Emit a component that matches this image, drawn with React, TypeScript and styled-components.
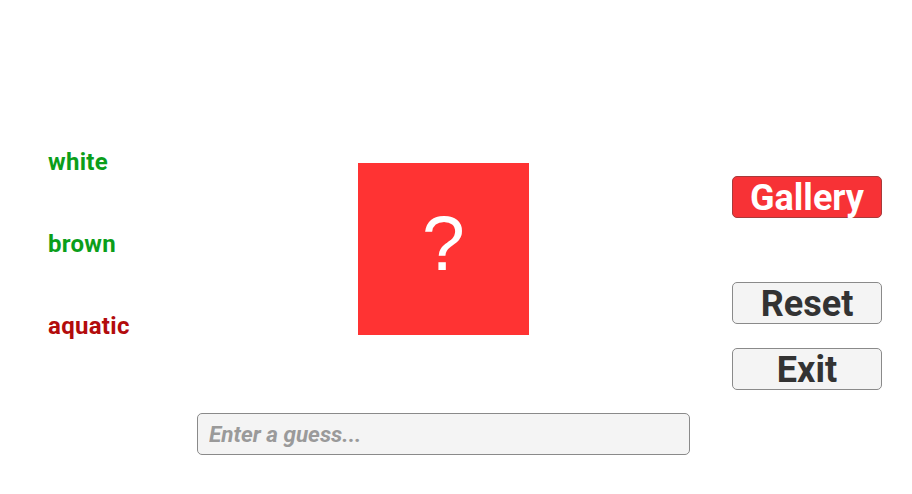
import React, { useState } from 'react';
import styled, { createGlobalStyle } from 'styled-components';

const GlobalStyle = createGlobalStyle`
  html, body {
    margin: 0;
    padding: 0;
    background: #ffffff;
    font-family: Roboto, "Liberation Sans", Arial, sans-serif;
  }
`;

const Board = styled.div`
  display: grid;
  grid-template-columns: 197px 161px 171px 161px 1fr;
  grid-template-rows: auto auto;
  align-content: start;
  row-gap: 23px;
  padding-top: 150px;
  width: 912px;
  height: 494px;
  box-sizing: border-box;
`;

const Clues = styled.ul`
  grid-column: 1;
  grid-row: 1;
  list-style: none;
  margin: 0;
  padding: 0 0 0 48px;
  display: flex;
  flex-direction: column;
  gap: 58px;
`;

const Clue = styled.li<{ $correct: boolean }>`
  font-size: 24px;
  line-height: 24px;
  font-weight: 700;
  letter-spacing: 0.3px;
  white-space: nowrap;
  color: ${({ $correct }) => ($correct ? '#0b9e1a' : '#b30c0c')};
`;

const Mystery = styled.div`
  grid-column: 3;
  grid-row: 1;
  align-self: start;
  margin-top: 13px;
  width: 171px;
  height: 172px;
  box-sizing: border-box;
  padding-bottom: 12px;
  background: #ff3333;
  color: #ffffff;
  display: flex;
  align-items: center;
  justify-content: center;
  font-family: "Liberation Sans", Arial, sans-serif;
  font-size: 77px;
  font-weight: 400;
`;

const Controls = styled.div`
  grid-column: 5;
  grid-row: 1;
  justify-self: end;
  margin-top: 26px;
  padding-right: 30px;
  display: flex;
  flex-direction: column;
`;

const ActionButton = styled.button<{ $primary?: boolean; $gapAfter?: number }>`
  width: 150px;
  height: 42px;
  box-sizing: border-box;
  padding: 0;
  border-radius: 5px;
  border: 1px solid ${({ $primary }) => ($primary ? '#a83a3a' : '#8a8a8a')};
  background: ${({ $primary }) => ($primary ? '#f73236' : '#f4f4f4')};
  color: ${({ $primary }) => ($primary ? '#ffffff' : '#333333')};
  font-family: Roboto, "Liberation Sans", Arial, sans-serif;
  font-size: 36px;
  font-weight: 700;
  line-height: 42px;
  margin-bottom: ${({ $gapAfter }) => $gapAfter ?? 0}px;
  cursor: pointer;
`;

const GuessInput = styled.input`
  grid-column: 2 / 5;
  grid-row: 2;
  align-self: start;
  width: 493px;
  height: 42px;
  box-sizing: border-box;
  padding: 0 11px;
  border: 1px solid #8a8a8a;
  border-radius: 5px;
  background: #f4f4f4;
  font-family: Roboto, "Liberation Sans", Arial, sans-serif;
  font-size: 22.5px;
  font-weight: 700;
  font-style: italic;
  color: #333333;
  outline: none;

  &::placeholder {
    color: #9a9a9a;
  }
`;

const clues = [
  { word: 'white', correct: true },
  { word: 'brown', correct: true },
  { word: 'aquatic', correct: false },
];

export default function App() {
  const [guess, setGuess] = useState('');

  return (
    <>
      <GlobalStyle />
      <Board>
        <Clues>
          {clues.map((c) => (
            <Clue key={c.word} $correct={c.correct}>
              {c.word}
            </Clue>
          ))}
        </Clues>

        <Mystery>?</Mystery>

        <Controls>
          <ActionButton $primary $gapAfter={64}>
            Gallery
          </ActionButton>
          <ActionButton $gapAfter={24}>Reset</ActionButton>
          <ActionButton>Exit</ActionButton>
        </Controls>

        <GuessInput
          placeholder="Enter a guess..."
          value={guess}
          onChange={(e) => setGuess(e.target.value)}
        />
      </Board>
    </>
  );
}
